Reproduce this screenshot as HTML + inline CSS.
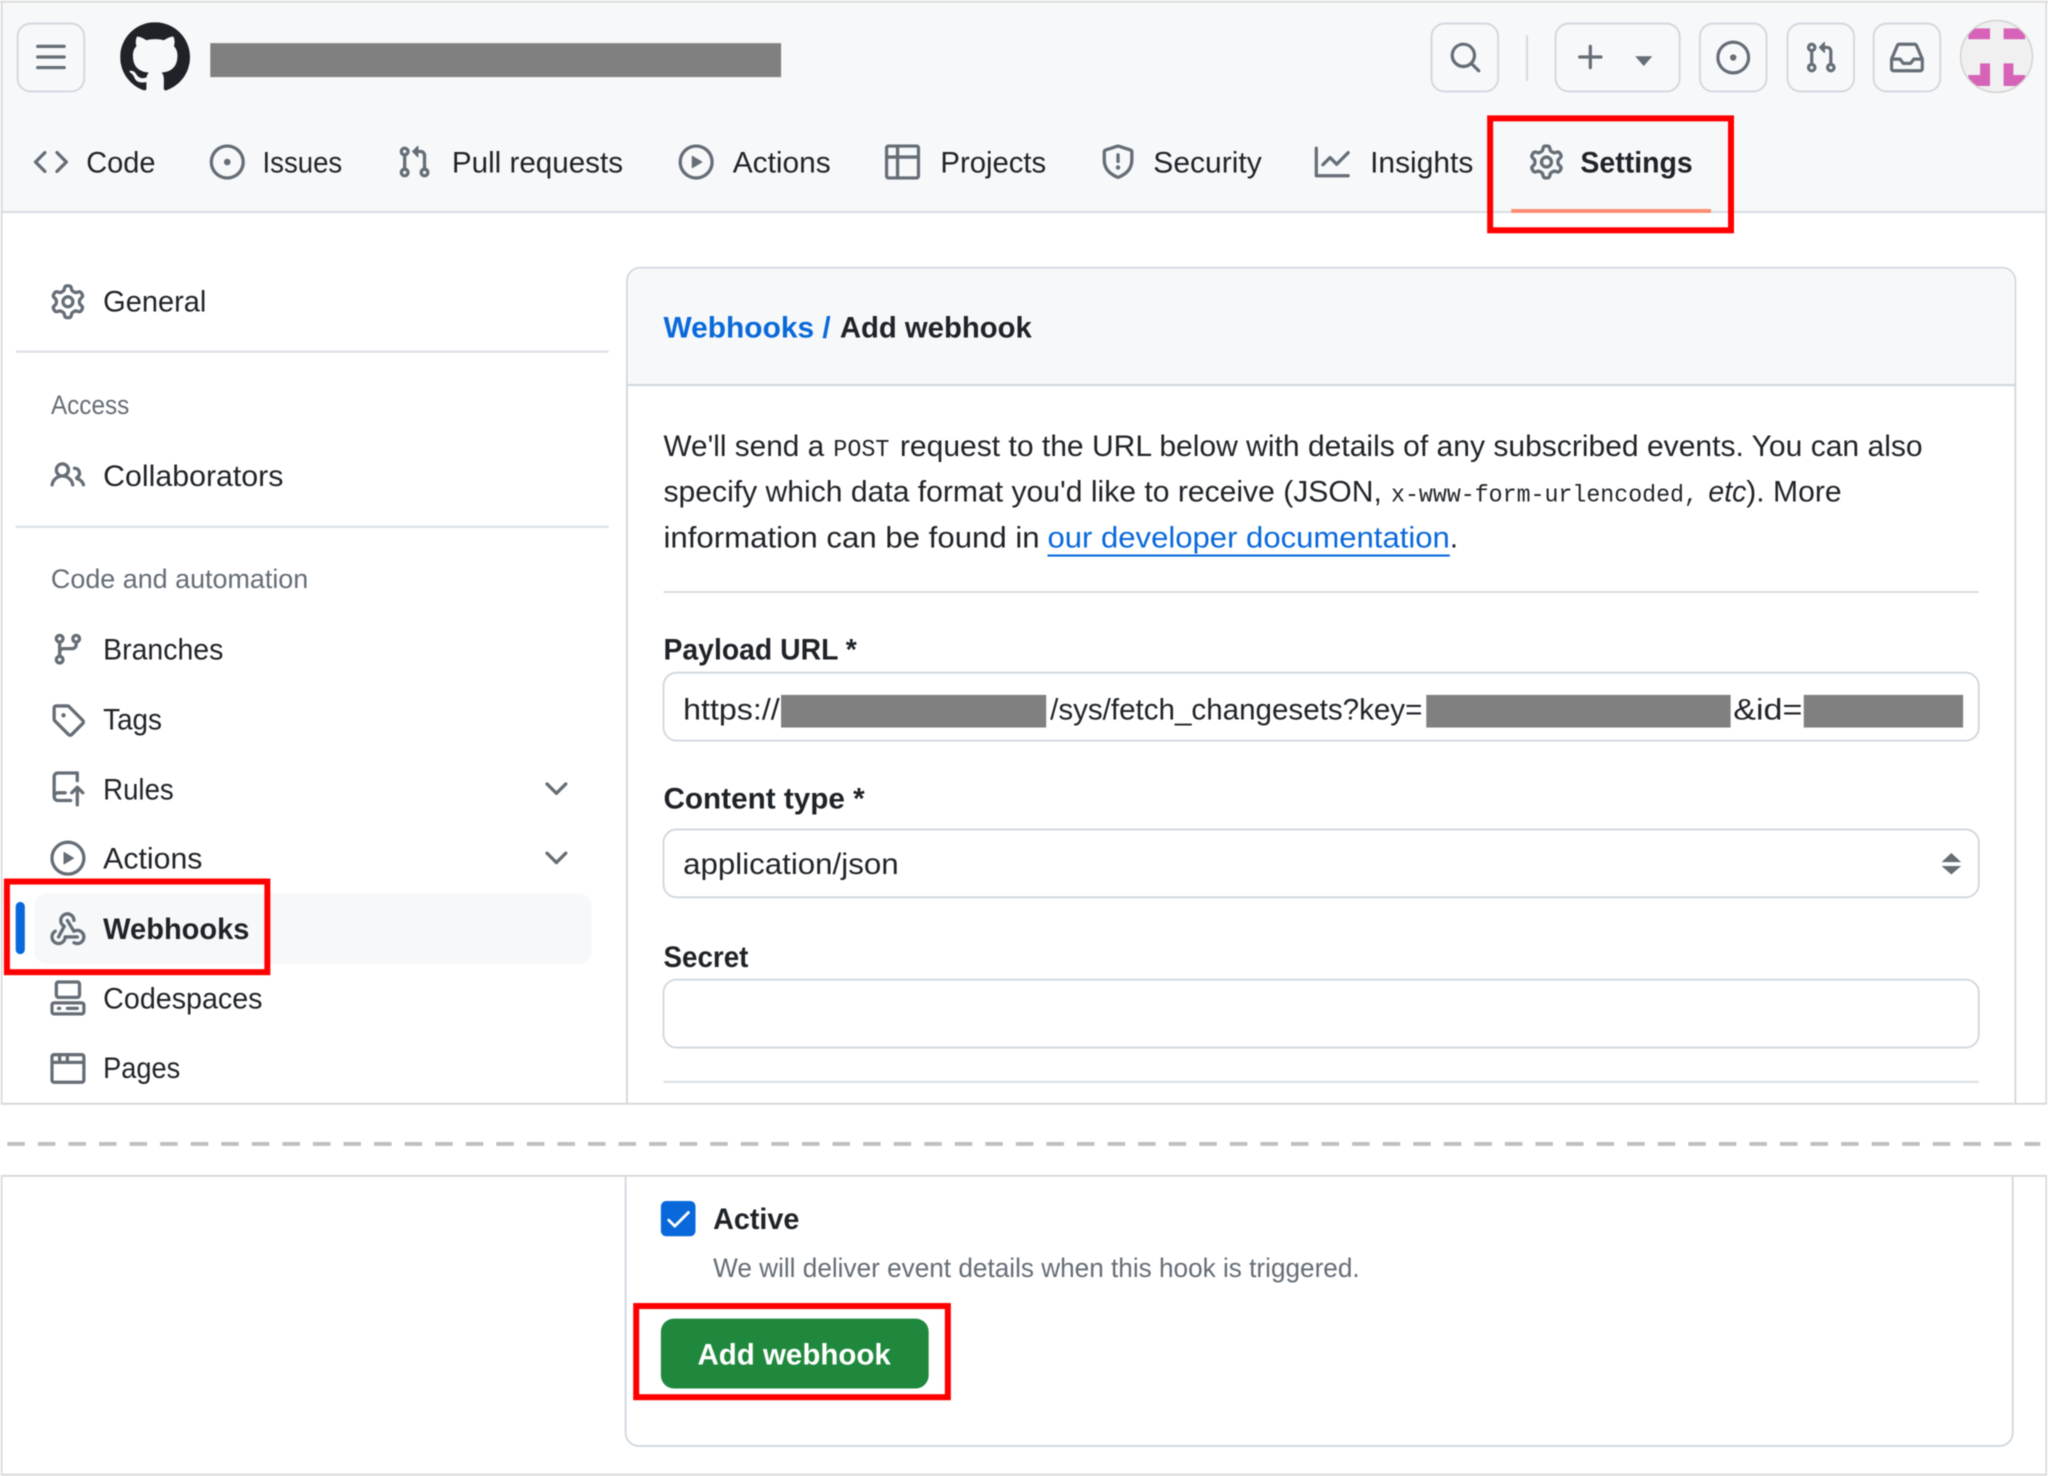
<!DOCTYPE html>
<html lang="en">
<head>
<meta charset="utf-8">
<title>Add webhook</title>
<style>
html,body{margin:0;padding:0;background:#fff;width:2048px;height:1476px;overflow:hidden}
svg{display:block;filter:blur(.5px)}
text{font-family:"Liberation Sans",sans-serif;font-size:23px;fill:#1f2328}
.ic{fill:#656d76}
.lab{font-size:20.5px;fill:#656d76}
.b{font-weight:700}
.mono{font-family:"Liberation Mono",monospace;font-size:18.5px}
.lnk{fill:#0969da}
</style>
</head>
<body>
<svg width="2048" height="1476" viewBox="0 0 1568 1130" xmlns="http://www.w3.org/2000/svg">
<defs>
<symbol id="bars" viewBox="0 0 16 16"><path d="M1 2.75A.75.75 0 0 1 1.75 2h12.5a.75.75 0 0 1 0 1.5H1.75A.75.75 0 0 1 1 2.75Zm0 5A.75.75 0 0 1 1.75 7h12.5a.75.75 0 0 1 0 1.5H1.75A.75.75 0 0 1 1 7.75ZM1.75 12h12.5a.75.75 0 0 1 0 1.5H1.75a.75.75 0 0 1 0-1.5Z"/></symbol>
<symbol id="code" viewBox="0 0 16 16"><path d="m11.28 3.22 4.25 4.25a.75.75 0 0 1 0 1.06l-4.25 4.25a.749.749 0 0 1-1.275-.326.749.749 0 0 1 .215-.734L13.94 8l-3.72-3.72a.749.749 0 0 1 .326-1.275.749.749 0 0 1 .734.215Zm-6.56 0a.751.751 0 0 1 1.042.018.751.751 0 0 1 .018 1.042L2.06 8l3.72 3.72a.749.749 0 0 1-.326 1.275.749.749 0 0 1-.734-.215L.47 8.53a.75.75 0 0 1 0-1.06Z"/></symbol>
<symbol id="issue" viewBox="0 0 16 16"><path d="M8 9.5a1.5 1.5 0 1 0 0-3 1.5 1.5 0 0 0 0 3Z"/><path d="M8 0a8 8 0 1 1 0 16A8 8 0 0 1 8 0ZM1.5 8a6.5 6.5 0 1 0 13 0 6.5 6.5 0 0 0-13 0Z"/></symbol>
<symbol id="pr" viewBox="0 0 16 16"><path d="M1.5 3.25a2.25 2.25 0 1 1 3 2.122v5.256a2.251 2.251 0 1 1-1.5 0V5.372A2.25 2.25 0 0 1 1.5 3.25Zm5.677-.177L9.573.677A.25.25 0 0 1 10 .854V2.5h1A2.5 2.5 0 0 1 13.5 5v5.628a2.251 2.251 0 1 1-1.5 0V5a1 1 0 0 0-1-1h-1v1.646a.25.25 0 0 1-.427.177L7.177 3.427a.25.25 0 0 1 0-.354ZM3.75 2.5a.75.75 0 1 0 0 1.5.75.75 0 0 0 0-1.5Zm0 9.5a.75.75 0 1 0 0 1.5.75.75 0 0 0 0-1.5Zm8.25.75a.75.75 0 1 0 1.5 0 .75.75 0 0 0-1.5 0Z"/></symbol>
<symbol id="play" viewBox="0 0 16 16"><path d="M8 0a8 8 0 1 1 0 16A8 8 0 0 1 8 0ZM1.5 8a6.5 6.5 0 1 0 13 0 6.5 6.5 0 0 0-13 0Zm4.879-2.773 4.264 2.559a.25.25 0 0 1 0 .428l-4.264 2.559A.25.25 0 0 1 6 10.559V5.442a.25.25 0 0 1 .379-.215Z"/></symbol>
<symbol id="table" viewBox="0 0 16 16"><path d="M0 1.75C0 .784.784 0 1.75 0h12.5C15.216 0 16 .784 16 1.75v12.5A1.75 1.75 0 0 1 14.25 16H1.75A1.75 1.75 0 0 1 0 14.25ZM6.5 6.5v8h7.75a.25.25 0 0 0 .25-.25V6.5Zm8-1.5V1.75a.25.25 0 0 0-.25-.25H6.5V5Zm-13 1.5v7.75c0 .138.112.25.25.25H5v-8ZM5 5V1.5H1.75a.25.25 0 0 0-.25.25V5Z"/></symbol>
<symbol id="shield" viewBox="0 0 16 16"><path d="M7.467.133a1.748 1.748 0 0 1 1.066 0l5.25 1.68A1.75 1.75 0 0 1 15 3.48V7c0 1.566-.32 3.182-1.303 4.682-.983 1.498-2.585 2.813-5.032 3.855a1.697 1.697 0 0 1-1.33 0c-2.447-1.042-4.049-2.357-5.032-3.855C1.32 10.182 1 8.566 1 7V3.48a1.75 1.75 0 0 1 1.217-1.667Zm.61 1.429a.25.25 0 0 0-.153 0l-5.25 1.68a.25.25 0 0 0-.174.238V7c0 1.358.275 2.666 1.057 3.86.784 1.194 2.121 2.34 4.366 3.297a.196.196 0 0 0 .154 0c2.245-.956 3.582-2.104 4.366-3.298C13.225 9.666 13.5 8.36 13.5 7V3.48a.251.251 0 0 0-.174-.237l-5.25-1.68ZM8.75 4.75v3a.75.75 0 0 1-1.5 0v-3a.75.75 0 0 1 1.5 0ZM9 10.5a1 1 0 1 1-2 0 1 1 0 0 1 2 0Z"/></symbol>
<symbol id="graph" viewBox="0 0 16 16"><path d="M1.5 1.75V13.5h13.75a.75.75 0 0 1 0 1.5H.75a.75.75 0 0 1-.75-.75V1.75a.75.75 0 0 1 1.5 0Zm14.28 2.53-5.25 5.25a.75.75 0 0 1-1.06 0L7 7.06 4.28 9.78a.751.751 0 0 1-1.042-.018.751.751 0 0 1-.018-1.042l3.25-3.25a.75.75 0 0 1 1.06 0L10 7.94l4.72-4.72a.751.751 0 0 1 1.042.018.751.751 0 0 1 .018 1.042Z"/></symbol>
<symbol id="gear" viewBox="0 0 16 16"><path d="M8 0a8.2 8.2 0 0 1 .701.031C9.444.095 9.99.645 10.16 1.29l.288 1.107c.018.066.079.158.212.224.231.114.454.243.668.386.123.082.233.09.299.071l1.103-.303c.644-.176 1.392.021 1.82.63.27.385.506.792.704 1.218.315.675.111 1.422-.364 1.891l-.814.806c-.049.048-.098.147-.088.294.016.257.016.515 0 .772-.01.147.038.246.088.294l.814.806c.475.469.679 1.216.364 1.891a7.977 7.977 0 0 1-.704 1.217c-.428.61-1.176.807-1.82.63l-1.102-.302c-.067-.019-.177-.011-.3.071a5.909 5.909 0 0 1-.668.386c-.133.066-.194.158-.211.224l-.29 1.106c-.168.646-.715 1.196-1.458 1.26a8.006 8.006 0 0 1-1.402 0c-.743-.064-1.289-.614-1.458-1.26l-.289-1.106c-.018-.066-.079-.158-.212-.224a5.738 5.738 0 0 1-.668-.386c-.123-.082-.233-.09-.299-.071l-1.103.303c-.644.176-1.392-.021-1.82-.63a8.12 8.12 0 0 1-.704-1.218c-.315-.675-.111-1.422.363-1.891l.815-.806c.05-.048.098-.147.088-.294a6.214 6.214 0 0 1 0-.772c.01-.147-.038-.246-.088-.294l-.815-.806C.635 6.045.431 5.298.746 4.623a7.92 7.92 0 0 1 .704-1.217c.428-.61 1.176-.807 1.82-.63l1.102.302c.067.019.177.011.3-.071.214-.143.437-.272.668-.386.133-.066.194-.158.211-.224l.29-1.106C6.009.645 6.556.095 7.299.03 7.53.01 7.764 0 8 0Zm-.571 1.525c-.036.003-.108.036-.137.146l-.289 1.105c-.147.561-.549.967-.998 1.189-.173.086-.34.183-.5.29-.417.278-.97.423-1.529.27l-1.103-.303c-.109-.03-.175.016-.195.045-.22.312-.412.644-.573.99-.014.031-.021.11.059.19l.815.806c.411.406.562.957.53 1.456a4.709 4.709 0 0 0 0 .582c.032.499-.119 1.05-.53 1.456l-.815.806c-.081.08-.073.159-.059.19.162.346.353.677.573.989.02.03.085.076.195.046l1.102-.303c.56-.153 1.113-.008 1.53.27.161.107.328.204.501.29.447.222.85.629.997 1.189l.289 1.105c.029.109.101.143.137.146a6.6 6.6 0 0 0 1.142 0c.036-.003.108-.036.137-.146l.289-1.105c.147-.561.549-.967.998-1.189.173-.086.34-.183.5-.29.417-.278.97-.423 1.529-.27l1.103.303c.109.029.175-.016.195-.045.22-.313.411-.644.573-.99.014-.031.021-.11-.059-.19l-.815-.806c-.411-.406-.562-.957-.53-1.456a4.709 4.709 0 0 0 0-.582c-.032-.499.119-1.05.53-1.456l.815-.806c.081-.08.073-.159.059-.19a6.464 6.464 0 0 0-.573-.989c-.02-.03-.085-.076-.195-.046l-1.102.303c-.56.153-1.113.008-1.53-.27a4.44 4.44 0 0 0-.501-.29c-.447-.222-.85-.629-.997-1.189l-.289-1.105c-.029-.11-.101-.143-.137-.146a6.6 6.6 0 0 0-1.142 0ZM11 8a3 3 0 1 1-6 0 3 3 0 0 1 6 0ZM9.5 8a1.5 1.5 0 1 0-3.001.001A1.5 1.5 0 0 0 9.5 8Z"/></symbol>
<symbol id="people" viewBox="0 0 16 16"><path d="M2 5.5a3.5 3.5 0 1 1 5.898 2.549 5.508 5.508 0 0 1 3.034 4.084.75.75 0 1 1-1.482.235 4 4 0 0 0-7.9 0 .75.75 0 0 1-1.482-.236A5.507 5.507 0 0 1 3.102 8.05 3.493 3.493 0 0 1 2 5.5ZM11 4a3.001 3.001 0 0 1 2.22 5.018 5.01 5.01 0 0 1 2.56 3.012.749.749 0 0 1-.885.954.752.752 0 0 1-.549-.514 3.507 3.507 0 0 0-2.522-2.372.75.75 0 0 1-.574-.73v-.352a.75.75 0 0 1 .416-.672A1.5 1.5 0 0 0 11 5.5.75.75 0 0 1 11 4Zm-5.5-.5a2 2 0 1 0-.001 3.999A2 2 0 0 0 5.5 3.5Z"/></symbol>
<symbol id="branch" viewBox="0 0 16 16"><path d="M9.5 3.25a2.25 2.25 0 1 1 3 2.122V6A2.5 2.5 0 0 1 10 8.5H6a1 1 0 0 0-1 1v1.128a2.251 2.251 0 1 1-1.5 0V5.372a2.25 2.25 0 1 1 1.5 0v1.836A2.493 2.493 0 0 1 6 7h4a1 1 0 0 0 1-1v-.628A2.25 2.25 0 0 1 9.5 3.25Zm-6 0a.75.75 0 1 0 1.5 0 .75.75 0 0 0-1.5 0Zm8.25-.75a.75.75 0 1 0 0 1.5.75.75 0 0 0 0-1.5ZM4.25 12a.75.75 0 1 0 0 1.5.75.75 0 0 0 0-1.5Z"/></symbol>
<symbol id="tag" viewBox="0 0 16 16"><path d="M1 7.775V2.75C1 1.784 1.784 1 2.75 1h5.025c.464 0 .91.184 1.238.513l6.25 6.25a1.75 1.75 0 0 1 0 2.474l-5.026 5.026a1.75 1.75 0 0 1-2.474 0l-6.25-6.25A1.75 1.75 0 0 1 1 7.775Zm1.5 0c0 .066.026.13.073.177l6.25 6.25a.25.25 0 0 0 .354 0l5.025-5.025a.25.25 0 0 0 0-.354l-6.25-6.25a.25.25 0 0 0-.177-.073H2.75a.25.25 0 0 0-.25.25ZM6 5a1 1 0 1 1 0 2 1 1 0 0 1 0-2Z"/></symbol>
<symbol id="rules" viewBox="0 0 16 16"><path d="M1 2.5A2.5 2.5 0 0 1 3.5 0h8.75a.75.75 0 0 1 .75.75v3.5a.75.75 0 0 1-1.5 0V1.5h-8a1 1 0 0 0-1 1v6.708A2.493 2.493 0 0 1 3.5 9h3.25a.75.75 0 0 1 0 1.5H3.5a1 1 0 0 0 0 2h5.75a.75.75 0 0 1 0 1.5H3.5A2.5 2.5 0 0 1 1 11.5Zm13.23 7.79h-.001l-1.224-1.224v6.184a.75.75 0 0 1-1.5 0V9.066L10.28 10.29a.75.75 0 0 1-1.06-1.061l2.505-2.504a.75.75 0 0 1 1.06 0L15.29 9.23a.751.751 0 0 1-.018 1.042.751.751 0 0 1-1.042.018Z"/></symbol>
<symbol id="webhook" viewBox="0 0 16 16"><path d="M5.5 4.25a2.25 2.25 0 0 1 4.5 0 .75.75 0 0 0 1.5 0 3.75 3.75 0 1 0-6.14 2.889l-2.272 4.258a.75.75 0 0 0 1.324.706L7 7.25a.75.75 0 0 0-.309-1.015A2.25 2.25 0 0 1 5.5 4.25Z"/><path d="M7.364 3.607a.75.75 0 0 1 1.03.257l2.608 4.349a3.75 3.75 0 1 1-.628 6.785.75.75 0 0 1 .752-1.299 2.25 2.25 0 1 0-.033-3.88.75.75 0 0 1-1.03-.256L7.107 4.636a.75.75 0 0 1 .257-1.03Z"/><path d="M2.9 8.776A.75.75 0 0 1 2.625 9.8 2.25 2.25 0 1 0 6 11.75a.75.75 0 0 1 .75-.751h5.5a.75.75 0 0 1 0 1.5H7.425a3.751 3.751 0 1 1-5.55-3.998.75.75 0 0 1 1.024.274Z"/></symbol>
<symbol id="codesp" viewBox="0 0 16 16"><path d="M0 11.25c0-.966.784-1.75 1.75-1.75h12.5c.966 0 1.75.784 1.75 1.75v3A1.75 1.75 0 0 1 14.25 16H1.75A1.75 1.75 0 0 1 0 14.25Zm2-9.5C2 .784 2.784 0 3.75 0h8.5C13.216 0 14 .784 14 1.75v5a1.75 1.75 0 0 1-1.75 1.75h-8.5A1.75 1.75 0 0 1 2 6.75Zm1.75-.25a.25.25 0 0 0-.25.25v5c0 .138.112.25.25.25h8.5a.25.25 0 0 0 .25-.25v-5a.25.25 0 0 0-.25-.25Zm-2 9.5a.25.25 0 0 0-.25.25v3c0 .138.112.25.25.25h12.5a.25.25 0 0 0 .25-.25v-3a.25.25 0 0 0-.25-.25Z"/><path d="M7 12.75a.75.75 0 0 1 .75-.75h4.5a.75.75 0 0 1 0 1.5h-4.5a.75.75 0 0 1-.75-.75Zm-4 0a.75.75 0 0 1 .75-.75h.5a.75.75 0 0 1 0 1.5h-.5a.75.75 0 0 1-.75-.75Z"/></symbol>
<symbol id="browser" viewBox="0 0 16 16"><path d="M0 2.75C0 1.784.784 1 1.75 1h12.5c.966 0 1.75.784 1.75 1.75v10.5A1.75 1.75 0 0 1 14.25 15H1.75A1.75 1.75 0 0 1 0 13.25ZM14.5 6h-13v7.25c0 .138.112.25.25.25h12.5a.25.25 0 0 0 .25-.25Zm-6-3.5v2h6V2.75a.25.25 0 0 0-.25-.25ZM5 2.5v2h2v-2Zm-3.25 0a.25.25 0 0 0-.25.25V4.5h2v-2Z"/></symbol>
<symbol id="search" viewBox="0 0 16 16"><path d="M10.68 11.74a6 6 0 0 1-7.922-8.982 6 6 0 0 1 8.982 7.922l3.04 3.04a.749.749 0 0 1-.326 1.275.749.749 0 0 1-.734-.215ZM11.5 7a4.499 4.499 0 1 0-8.997 0A4.499 4.499 0 0 0 11.5 7Z"/></symbol>
<symbol id="plus" viewBox="0 0 16 16"><path d="M7.75 2a.75.75 0 0 1 .75.75V7h4.25a.75.75 0 0 1 0 1.5H8.5v4.25a.75.75 0 0 1-1.5 0V8.5H2.75a.75.75 0 0 1 0-1.5H7V2.75A.75.75 0 0 1 7.75 2Z"/></symbol>
<symbol id="inbox" viewBox="0 0 16 16"><path d="M2.8 2.06A1.75 1.75 0 0 1 4.41 1h7.18c.7 0 1.333.417 1.61 1.06l2.74 6.395c.04.093.06.194.06.295v4.5A1.75 1.75 0 0 1 14.25 15H1.75A1.75 1.75 0 0 1 0 13.25v-4.5c0-.101.02-.202.06-.295Zm1.61.44a.25.25 0 0 0-.23.152L1.887 8H4.75a.75.75 0 0 1 .6.3L6.625 10h2.75l1.275-1.7a.75.75 0 0 1 .6-.3h2.863L11.82 2.652a.25.25 0 0 0-.23-.152Zm10.09 7h-2.875l-1.275 1.7a.75.75 0 0 1-.6.3h-3.5a.75.75 0 0 1-.6-.3L4.375 9.5H1.5v3.75c0 .138.112.25.25.25h12.5a.25.25 0 0 0 .25-.25Z"/></symbol>
<symbol id="chev" viewBox="0 0 16 16"><path d="M12.78 5.22a.749.749 0 0 1 0 1.06l-4.25 4.25a.749.749 0 0 1-1.06 0L3.22 6.28a.749.749 0 1 1 1.06-1.06L8 8.939l3.72-3.719a.749.749 0 0 1 1.06 0Z"/></symbol>
<symbol id="check" viewBox="0 0 16 16"><path d="M13.78 4.22a.75.75 0 0 1 0 1.06l-7.25 7.25a.75.75 0 0 1-1.06 0L2.22 9.28a.751.751 0 0 1 .018-1.042.751.751 0 0 1 1.042-.018L6 10.94l6.72-6.72a.75.75 0 0 1 1.06 0Z"/></symbol>
<symbol id="mark" viewBox="0 0 16 16"><path d="M8 0c4.42 0 8 3.58 8 8a8.013 8.013 0 0 1-5.45 7.59c-.4.08-.55-.17-.55-.38 0-.27.01-1.13.01-2.2 0-.75-.25-1.23-.54-1.48 1.78-.2 3.65-.88 3.65-3.95 0-.88-.31-1.59-.82-2.15.08-.2.36-1.02-.08-2.12 0 0-.67-.22-2.2.82-.64-.18-1.32-.27-2-.27-.68 0-1.36.09-2 .27-1.53-1.03-2.2-.82-2.2-.82-.44 1.1-.16 1.92-.08 2.12-.51.56-.82 1.28-.82 2.15 0 3.06 1.86 3.75 3.64 3.95-.23.2-.44.55-.51 1.07-.46.21-1.61.55-2.33-.66-.15-.24-.6-.83-1.23-.82-.67.01-.27.38.01.53.34.19.73.9.82 1.13.16.45.68 1.31 2.69.94 0 .67.01 1.3.01 1.49 0 .21-.15.45-.55.38A7.995 7.995 0 0 1 0 8c0-4.42 3.58-8 8-8Z"/></symbol>
<clipPath id="av"><circle cx="1528.6" cy="43.2" r="27"/></clipPath>
</defs>

<rect width="1568" height="1130" fill="#fff"/>
<!-- header -->
<rect x="1" y="1" width="1566" height="161" fill="#f6f8fa"/>
<rect x="0" y="0.5" width="1568" height="1.5" fill="#dcdcdc"/>
<rect x="1" y="161.5" width="1566" height="1.6" fill="#d8dee4"/>
<g fill="#f6f8fa" stroke="#d0d7de" stroke-width="1.4">
<rect x="13.5" y="18" width="51" height="52" rx="10"/>
<rect x="1096" y="18" width="51" height="52" rx="10"/>
<rect x="1191" y="18" width="95" height="52" rx="10"/>
<rect x="1301.500" y="18" width="51" height="52" rx="10"/>
<rect x="1368.500" y="18" width="51" height="52" rx="10"/>
<rect x="1434.500" y="18" width="51" height="52" rx="10"/>
</g>
<rect x="1168.500" y="27" width="1.3" height="35" fill="#d0d7de"/>
<g class="ic">
<use href="#bars" x="26" y="31" width="26" height="26"/>
<use href="#search" x="1109" y="31" width="26" height="26"/>
<use href="#plus" x="1205" y="31" width="26" height="26"/>
<path d="M1252 43h13l-6.500 7.500z"/>
<use href="#issue" x="1314" y="31" width="26" height="26"/>
<use href="#pr" x="1381" y="31" width="26" height="26"/>
<use href="#inbox" x="1447" y="31" width="26" height="26"/>
</g>
<use href="#mark" x="92" y="17" width="53.500" height="53.500" fill="#1f2328"/>
<rect x="161" y="33" width="437" height="26" fill="#808080"/>
<circle cx="1528.600" cy="43.200" r="27.500" fill="#f0f0f0" stroke="#d4d4d4" stroke-width="1.200"/>
<g clip-path="url(#av)" fill="#d663b8">
<rect x="1507" y="21.700" width="16.600" height="8.300"/>
<rect x="1534" y="21.700" width="16.500" height="8.300"/>
<rect x="1516" y="48.500" width="7.600" height="9"/>
<rect x="1507" y="57.400" width="16.600" height="8.400"/>
<rect x="1534" y="48.500" width="7.500" height="9"/>
<rect x="1534" y="57.400" width="16.500" height="8.400"/>
</g>

<!-- nav -->
<g class="ic">
<use href="#code" x="25.500" y="110.500" width="27" height="27"/>
<use href="#issue" x="160.500" y="110.500" width="27" height="27"/>
<use href="#pr" x="303.500" y="110.500" width="27" height="27"/>
<use href="#play" x="519.500" y="110.500" width="27" height="27"/>
<use href="#table" x="677.500" y="110.500" width="27" height="27"/>
<use href="#shield" x="842.500" y="110.500" width="27" height="27"/>
<use href="#graph" x="1006.500" y="110.500" width="27" height="27"/>
<use href="#gear" x="1170.500" y="110.500" width="27" height="27"/>
</g>
<text x="66" y="132" textLength="53" lengthAdjust="spacingAndGlyphs">Code</text>
<text x="201" y="132" textLength="61" lengthAdjust="spacingAndGlyphs">Issues</text>
<text x="346" y="132" textLength="131" lengthAdjust="spacingAndGlyphs">Pull requests</text>
<text x="561" y="132" textLength="75" lengthAdjust="spacingAndGlyphs">Actions</text>
<text x="720" y="132" textLength="81" lengthAdjust="spacingAndGlyphs">Projects</text>
<text x="883" y="132" textLength="83" lengthAdjust="spacingAndGlyphs">Security</text>
<text x="1049" y="132" textLength="79" lengthAdjust="spacingAndGlyphs">Insights</text>
<text class="b" x="1210" y="132" textLength="86" lengthAdjust="spacingAndGlyphs">Settings</text>
<rect x="1157" y="160" width="153" height="3" fill="#fd8c73"/>

<!-- frame -->
<rect x="0.700" y="1" width="1.200" height="844" fill="#d8d8d8"/>
<rect x="1566" y="1" width="1.200" height="844" fill="#d8d8d8"/>

<!-- sidebar -->
<rect x="26" y="684" width="427" height="54" rx="10" fill="#f6f8fa"/>
<rect x="12" y="690.500" width="7" height="40" rx="3.500" fill="#0969da"/>
<rect x="12" y="268.500" width="454" height="1.500" fill="#d8dee4"/>
<rect x="12" y="402.500" width="454" height="1.500" fill="#d8dee4"/>
<g class="ic">
<use href="#gear" x="38.500" y="217.500" width="27" height="27"/>
<use href="#people" x="38.500" y="350.500" width="27" height="27"/>
<use href="#branch" x="38.500" y="483.500" width="27" height="27"/>
<use href="#tag" x="38.500" y="537.500" width="27" height="27"/>
<use href="#rules" x="38.500" y="590.500" width="27" height="27"/>
<use href="#play" x="38.500" y="643.500" width="27" height="27"/>
<use href="#webhook" x="38.500" y="697.500" width="27" height="27"/>
<use href="#codesp" x="38.500" y="750.500" width="27" height="27"/>
<use href="#browser" x="38.500" y="804.500" width="27" height="27"/>
<use href="#chev" x="412.500" y="590.500" width="27" height="27"/>
<use href="#chev" x="412.500" y="643.500" width="27" height="27"/>
</g>
<text x="79" y="238.500" textLength="79" lengthAdjust="spacingAndGlyphs">General</text>
<text class="lab" x="39" y="317" textLength="60" lengthAdjust="spacingAndGlyphs">Access</text>
<text x="79" y="372" textLength="138" lengthAdjust="spacingAndGlyphs">Collaborators</text>
<text class="lab" x="39" y="450" textLength="197" lengthAdjust="spacingAndGlyphs">Code and automation</text>
<text x="79" y="505" textLength="92" lengthAdjust="spacingAndGlyphs">Branches</text>
<text x="79" y="558.500" textLength="45" lengthAdjust="spacingAndGlyphs">Tags</text>
<text x="79" y="612" textLength="54" lengthAdjust="spacingAndGlyphs">Rules</text>
<text x="79" y="665" textLength="76" lengthAdjust="spacingAndGlyphs">Actions</text>
<text class="b" x="79" y="719" textLength="112" lengthAdjust="spacingAndGlyphs">Webhooks</text>
<text x="79" y="772" textLength="122" lengthAdjust="spacingAndGlyphs">Codespaces</text>
<text x="79" y="825.500" textLength="59" lengthAdjust="spacingAndGlyphs">Pages</text>

<!-- panel top -->
<path d="M480 845V215a10 10 0 0 1 10-10H1533a10 10 0 0 1 10 10V845" fill="#fff" stroke="#d0d7de" stroke-width="1.400"/>
<path d="M480.700 295V215a9.500 9.500 0 0 1 9.500-9.500H1533a9.500 9.500 0 0 1 9.500 9.500V295Z" fill="#f6f8fa"/>
<rect x="480" y="294" width="1063" height="1.600" fill="#d0d7de"/>
<text class="b lnk" x="508" y="258.500" textLength="128" lengthAdjust="spacingAndGlyphs">Webhooks /</text>
<text class="b" x="643" y="258.500" textLength="147" lengthAdjust="spacingAndGlyphs">Add webhook</text>

<text x="508" y="349" textLength="123" lengthAdjust="spacingAndGlyphs">We'll send a</text>
<text class="mono" x="638" y="349" textLength="43" lengthAdjust="spacingAndGlyphs">POST</text>
<text x="689" y="349" textLength="783" lengthAdjust="spacingAndGlyphs">request to the URL below with details of any subscribed events. You can also</text>
<text x="508" y="384" textLength="550" lengthAdjust="spacingAndGlyphs">specify which data format you'd like to receive (JSON,</text>
<text class="mono" x="1065" y="384" textLength="235" lengthAdjust="spacingAndGlyphs">x-www-form-urlencoded,</text>
<text x="1308" y="384" font-style="italic" textLength="29" lengthAdjust="spacingAndGlyphs">etc</text>
<text x="1337" y="384" textLength="73" lengthAdjust="spacingAndGlyphs">). More</text>
<text x="508" y="419" textLength="288" lengthAdjust="spacingAndGlyphs">information can be found in</text>
<text class="lnk" x="802" y="419" textLength="308" lengthAdjust="spacingAndGlyphs">our developer documentation</text>
<text x="1110" y="419">.</text>
<rect x="802" y="424.500" width="308" height="1.600" fill="#0969da"/>
<rect x="508" y="452.500" width="1007" height="1.500" fill="#d8dee4"/>

<text class="b" x="508" y="505" textLength="148" lengthAdjust="spacingAndGlyphs">Payload URL *</text>
<rect x="508" y="515" width="1007" height="52" rx="10" fill="#fff" stroke="#d0d7de" stroke-width="1.400"/>
<text x="523" y="551" textLength="74" lengthAdjust="spacingAndGlyphs">https://</text>
<rect x="598" y="532" width="203" height="25" fill="#808080"/>
<text x="804" y="551" textLength="285" lengthAdjust="spacingAndGlyphs">/sys/fetch_changesets?key=</text>
<rect x="1092" y="532" width="233" height="25" fill="#808080"/>
<text x="1327" y="551" textLength="53" lengthAdjust="spacingAndGlyphs">&amp;id=</text>
<rect x="1381" y="532" width="122" height="25" fill="#808080"/>

<text class="b" x="508" y="619" textLength="154" lengthAdjust="spacingAndGlyphs">Content type *</text>
<rect x="508" y="635" width="1007" height="52" rx="10" fill="#fff" stroke="#d0d7de" stroke-width="1.400"/>
<text x="523" y="669" textLength="165" lengthAdjust="spacingAndGlyphs">application/json</text>
<path d="M1494 653l7.500 7h-15zM1486.500 663h15l-7.500 6.500z" fill="#656d76"/>

<text class="b" x="508" y="740.500" textLength="65" lengthAdjust="spacingAndGlyphs">Secret</text>
<rect x="508" y="750" width="1007" height="52" rx="10" fill="#fff" stroke="#d0d7de" stroke-width="1.400"/>
<rect x="508" y="827.500" width="1007" height="1.500" fill="#d8dee4"/>
<rect x="0.700" y="844.300" width="1566.500" height="1.500" fill="#d8d8d8"/>

<!-- dashed separator -->
<line x1="5.600" y1="875.800" x2="1562" y2="875.800" stroke="#bfbfbf" stroke-width="3" stroke-dasharray="13.400 10"/>

<!-- lower section -->
<rect x="0.700" y="899.500" width="1566.500" height="1.500" fill="#d8d8d8"/>
<rect x="0.700" y="900" width="1.200" height="229" fill="#d8d8d8"/>
<rect x="1566" y="900" width="1.200" height="229" fill="#d8d8d8"/>
<rect x="0.700" y="1128.300" width="1566.500" height="1.500" fill="#d8d8d8"/>
<path d="M479 901V1097a10 10 0 0 0 10 10H1531a10 10 0 0 0 10-10V901" fill="#fff" stroke="#d0d7de" stroke-width="1.400"/>
<rect x="506" y="919.500" width="26.500" height="27" rx="4" fill="#0969da"/>
<use href="#check" x="508" y="921.500" width="23" height="23" fill="#fff"/>
<text class="b" x="546" y="941" textLength="66" lengthAdjust="spacingAndGlyphs">Active</text>
<text class="lab" x="546" y="977.500" textLength="495" lengthAdjust="spacingAndGlyphs">We will deliver event details when this hook is triggered.</text>
<rect x="506" y="1009.500" width="205" height="53.500" rx="10" fill="#1f883d"/>
<text class="b" x="534" y="1044.500" textLength="148" lengthAdjust="spacingAndGlyphs" style="fill:#fff">Add webhook</text>

<!-- red highlight boxes -->
<g fill="none" stroke="#ff0000" stroke-width="4.600">
<rect x="1140.900" y="90.600" width="184.400" height="85.700"/>
<rect x="5.300" y="674.900" width="199.400" height="69.400"/>
<rect x="487.100" y="999.900" width="238.600" height="69.800"/>
</g>
</svg>
</body>
</html>
